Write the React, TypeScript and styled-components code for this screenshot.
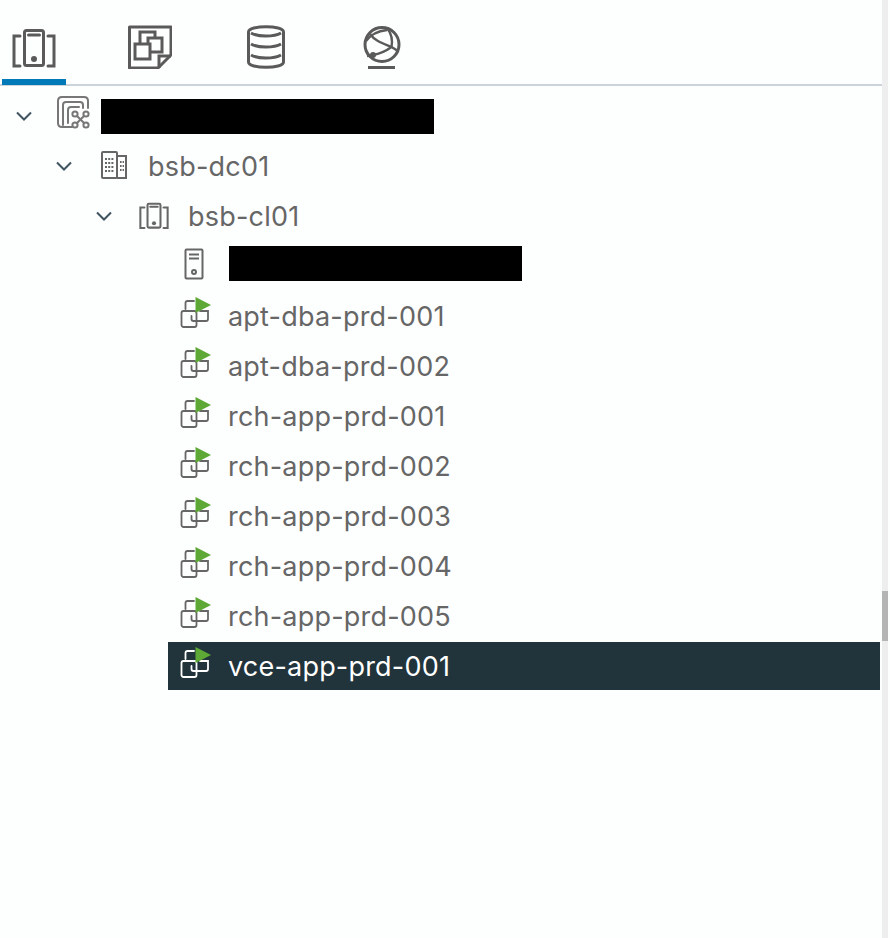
import React from "react";
import styled, { createGlobalStyle } from "styled-components";

const Global = createGlobalStyle`
  html, body { margin: 0; padding: 0; background: #fdfefe; }
  #root { width: 890px; height: 938px; overflow: hidden; }
`;

const Page = styled.div`
  position: relative;
  width: 890px;
  height: 938px;
  font-family: "Inter", "Liberation Sans", sans-serif;
  color: #666;
`;

const Tabs = styled.div`
  display: flex;
  height: 84px;
  padding-left: 2px;
  border-bottom: 2px solid #ccd3da;
  width: 880px;
`;

const Tab = styled.div<{ $active?: boolean }>`
  width: 64px;
  height: 85px;
  margin-right: 52px;
  box-sizing: border-box;
  display: flex;
  justify-content: center;
  padding-top: 25px;
  border-bottom: 6px solid ${(p) => (p.$active ? "#0079b8" : "transparent")};
  svg { display: block; }
`;

const Tree = styled.div`
  display: flex;
  flex-direction: column;
  padding-top: 5px;
  width: 880px;
`;

const Row = styled.div<{ $indent: number; $selected?: boolean; $lift?: number }>`
  height: 50px;
  box-sizing: border-box;
  padding-bottom: ${(p) => p.$lift ?? 0}px;
  display: flex;
  align-items: center;
  margin-left: ${(p) => p.$indent}px;
  color: ${(p) => (p.$selected ? "#fff" : "#666")};
`;

const SelectedBar = styled(Row)`
  height: 48px;
  margin-top: 1px;
  margin-bottom: 1px;
  background: #21333b;
`;

const Chevron = styled.div`
  width: 18px;
  height: 12px;
  margin-right: 24px;
  flex: none;
  svg { display: block; }
`;

const IconSlot = styled.div<{ $w: number; $gap: number; $lift?: number }>`
  width: ${(p) => p.$w}px;
  margin-right: ${(p) => p.$gap}px;
  margin-bottom: ${(p) => p.$lift ?? 0}px;
  flex: none;
  display: flex;
  justify-content: center;
  svg { display: block; }
`;

const Label = styled.span`
  font-size: 27px;
  line-height: 32px;
  padding-top: 2px;
  letter-spacing: 0.2px;
  white-space: nowrap;
`;

const Redaction = styled.div<{ $w: number; $h: number }>`
  width: ${(p) => p.$w}px;
  height: ${(p) => p.$h}px;
  background: #000;
  flex: none;
`;

const ScrollTrack = styled.div`
  position: absolute;
  top: 0;
  right: 2px;
  bottom: 0;
  width: 6px;
  background: #eeeeee;
`;

const ScrollThumb = styled.div`
  position: absolute;
  top: 591px;
  left: 0;
  width: 6px;
  height: 50px;
  background: #b4b4b4;
`;

const ChevronIcon = () => (
  <svg width="18" height="12" viewBox="0 0 18 12" fill="none" stroke="#3f5461" strokeWidth="2">
    <path d="M2 2.5 L9 9.5 L16 2.5" />
  </svg>
);

const ClusterIcon = ({ size = 44, stroke = "#5a5a5a" }: { size?: number; stroke?: string }) => (
  <svg width={size} height={size} viewBox="0 0 44 44" fill="none" stroke={stroke} strokeWidth="3" strokeLinecap="round">
    <rect x="12.5" y="5.5" width="19" height="35" rx="2" />
    <path d="M16.5 10 H27.5" />
    <circle cx="22" cy="34" r="3" fill={stroke} stroke="none" />
    <path d="M8 11 H2 V41 H8" />
    <path d="M36 11 H42 V41 H36" />
  </svg>
);

const VmTemplatesIcon = () => (
  <svg width="44" height="44" viewBox="0 0 44 44" fill="none" stroke="#5a5a5a" strokeWidth="3">
    <path d="M1.5 2 H43 V30 L30 43 H1.5 Z" strokeLinejoin="round" />
    <path d="M43 31 H31 V43" />
    <rect x="12" y="7" width="15" height="14" />
    <rect x="20" y="13" width="14" height="14" fill="#fdfefe" />
    <rect x="7" y="19" width="15" height="15" fill="#fdfefe" />
  </svg>
);

const StorageIcon = () => (
  <svg width="40" height="44" viewBox="0 0 40 44" fill="none" stroke="#5a5a5a" strokeWidth="3">
    <path d="M2.5 7 C2.5 0 37.5 0 37.5 7 V37 C37.5 44 2.5 44 2.5 37 Z" />
    <path d="M5 8 C12 12 28 12 35 8" />
    <path d="M5 19 C12 23 28 23 35 19" />
    <path d="M5 30 C12 34 28 34 35 30" />
  </svg>
);

const NetworkIcon = () => (
  <svg width="40" height="44" viewBox="0 0 40 44" fill="none" stroke="#5a5a5a" strokeWidth="3">
    <circle cx="20" cy="19.5" r="17" />
    <path d="M5 31 L11 30 C17 29 24 26 29.5 22 L36 26" strokeWidth="2.4" />
    <path d="M8 9 C13 16 20 18 29.5 22" strokeWidth="2.4" />
    <path d="M25 3 C29 8 31 14 29.5 22" strokeWidth="2.4" />
    <path d="M4 16 C9 9 16 6 25 5" strokeWidth="2.4" />
    <circle cx="11" cy="30" r="3" fill="#5a5a5a" stroke="none" />
    <path d="M6 42.5 H33" />
  </svg>
);

const DatacenterIcon = () => (
  <svg width="26" height="28" viewBox="0 0 26 28" fill="none" stroke="#666" strokeWidth="2">
    <rect x="1" y="1" width="15" height="26" rx="1" />
    <path d="M16 5 H25 V27 H16" />
    <path d="M4 8 H13 M4 12 H13 M4 16 H13 M4 20 H13" strokeDasharray="2 1.2" />
    <path d="M19 11 H23 M19 15 H23 M19 19 H23" strokeDasharray="1.6 1" />
  </svg>
);

const VCenterIcon = () => (
  <svg width="34" height="34" viewBox="0 0 34 34" fill="none" stroke="#777" strokeWidth="2" strokeLinecap="round">
    <path d="M15 31 H5 Q1 31 1 27 V5 Q1 1 5 1 H27 Q31 1 31 5 V12" />
    <path d="M6 29 V9 Q6 6 9 6 H23 Q26 6 26 9 V12" />
    <path d="M11 27 V14 Q11 11 14 11 H22" />
    <circle cx="18" cy="18" r="2.6" />
    <circle cx="29" cy="18" r="2.6" />
    <circle cx="18" cy="29" r="2.6" />
    <circle cx="29" cy="29" r="2.6" />
    <path d="M20 20 L27 27 M27 20 L20 27" />
  </svg>
);

const HostIcon = () => (
  <svg width="20" height="32" viewBox="0 0 20 32" fill="none" stroke="#666" strokeWidth="2">
    <rect x="1.5" y="1.5" width="17" height="29" rx="1" />
    <path d="M5 6.5 H15 M5 10.5 H15" />
    <circle cx="10" cy="24" r="2" />
  </svg>
);

const VmIcon = ({ stroke }: { stroke: string }) => (
  <svg width="32" height="32" viewBox="0 0 32 32" fill="none" stroke={stroke} strokeWidth="1.8" strokeLinecap="round">
    <path d="M5.5 13 V7 Q5.5 5 7.5 5 H14" />
    <rect x="1.5" y="15" width="15" height="16" rx="2" />
    <path d="M11.5 20 V23 Q11.5 25 13.5 25 H26 Q28 25 28 23 V15 H20" />
    <path d="M15.5 1 L31 9 L15.5 17 Z" fill="#5ea936" stroke="none" />
  </svg>
);

const vms = [
  "apt-dba-prd-001",
  "apt-dba-prd-002",
  "rch-app-prd-001",
  "rch-app-prd-002",
  "rch-app-prd-003",
  "rch-app-prd-004",
  "rch-app-prd-005",
];

export default function App() {
  return (
    <Page>
      <Global />
      <Tabs>
        <Tab $active><ClusterIcon /></Tab>
        <Tab><VmTemplatesIcon /></Tab>
        <Tab><StorageIcon /></Tab>
        <Tab><NetworkIcon /></Tab>
      </Tabs>
      <Tree>
        <Row $indent={15}>
          <Chevron><ChevronIcon /></Chevron>
          <IconSlot $w={34} $gap={10} $lift={6}><VCenterIcon /></IconSlot>
          <Redaction $w={333} $h={35} />
        </Row>
        <Row $indent={55}>
          <Chevron><ChevronIcon /></Chevron>
          <IconSlot $w={34} $gap={17} $lift={3}><DatacenterIcon /></IconSlot>
          <Label>bsb-dc01</Label>
        </Row>
        <Row $indent={95}>
          <Chevron><ChevronIcon /></Chevron>
          <IconSlot $w={34} $gap={17} $lift={3}><ClusterIcon size={30} stroke="#666" /></IconSlot>
          <Label>bsb-cl01</Label>
        </Row>
        <Row $indent={168} $lift={5}>
          <IconSlot $w={51} $gap={10}><HostIcon /></IconSlot>
          <Redaction $w={293} $h={35} />
        </Row>
        {vms.map((n) => (
          <Row key={n} $indent={168}>
            <IconSlot $w={56} $gap={4} $lift={8}><VmIcon stroke="#666" /></IconSlot>
            <Label>{n}</Label>
          </Row>
        ))}
        <SelectedBar $indent={168} $selected>
          <IconSlot $w={56} $gap={4} $lift={8}><VmIcon stroke="#fff" /></IconSlot>
          <Label>vce-app-prd-001</Label>
        </SelectedBar>
      </Tree>
      <ScrollTrack><ScrollThumb /></ScrollTrack>
    </Page>
  );
}
